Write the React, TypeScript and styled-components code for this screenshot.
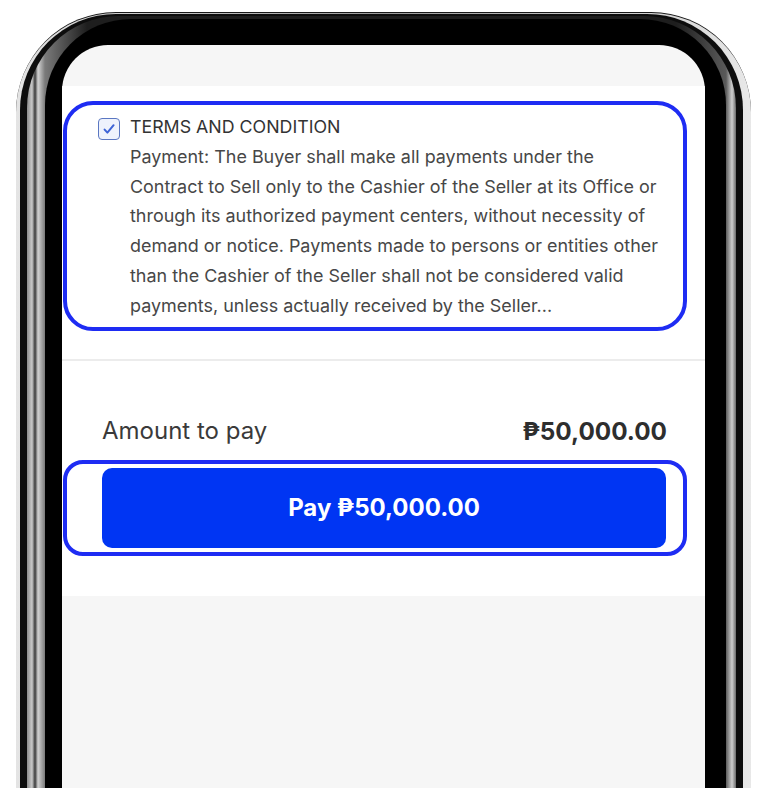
import React from "react";
import styled, { createGlobalStyle } from "styled-components";

const GlobalStyle = createGlobalStyle`
  html, body {
    margin: 0;
    padding: 0;
    background: #ffffff;
    overflow: hidden;
  }
  body {
    font-family: Inter, "Noto Sans", "Liberation Sans", sans-serif;
    width: 768px;
    height: 788px;
  }
`;

const termsLines = [
  "Payment: The Buyer shall make all payments under the",
  "Contract to Sell only to the Cashier of the Seller at its Office or",
  "through its authorized payment centers, without necessity of",
  "demand or notice. Payments made to persons or entities other",
  "than the Cashier of the Seller shall not be considered valid",
  "payments, unless actually received by the Seller...",
];

const amount = "₱50,000.00";

const App = () => {
  return (
    <>
      <GlobalStyle />
      <Stage>
        <PhoneShell>
          <EdgeDark>
            <MetalBand>
              <Bezel>
                <Screen>
                  <StatusArea />
                  <CheckoutCard>
                    <TermsBox>
                      <CheckBox>
                        <svg width="14" height="14" viewBox="0 0 14 14">
                          <path
                            d="M2.6 7.6 L5.4 10.6 L11.6 3.2"
                            fill="none"
                            stroke="#3d63d6"
                            strokeWidth="2"
                            strokeLinecap="round"
                            strokeLinejoin="round"
                          />
                        </svg>
                      </CheckBox>
                      <TermsText>
                        <TermsTitle>TERMS AND CONDITION</TermsTitle>
                        {termsLines.map((line, index) => (
                          <TermsLine key={index}>{line}</TermsLine>
                        ))}
                      </TermsText>
                    </TermsBox>
                    <Divider />
                    <AmountRow>
                      <AmountLabel>Amount to pay</AmountLabel>
                      <AmountValue>{amount}</AmountValue>
                    </AmountRow>
                    <PayOutline>
                      <PayButton>Pay {amount}</PayButton>
                    </PayOutline>
                  </CheckoutCard>
                </Screen>
              </Bezel>
            </MetalBand>
          </EdgeDark>
        </PhoneShell>
      </Stage>
    </>
  );
};

export default App;

const Stage = styled.div`
  width: 768px;
  height: 788px;
  overflow: hidden;
  padding: 12px 0 0 16px;
  box-sizing: border-box;
`;

/* phone body: light rim, dark line, metal band, black bezel */
const PhoneShell = styled.div`
  width: 735px;
  height: 820px;
  box-sizing: border-box;
  padding: 1px 8px 0 4px;
  border-radius: 100px 100px 0 0;
  background: linear-gradient(90deg, #e4e4e4 0%, #9a9a9a 50%, #e8e8e8 100%);
  border-top: 1px solid #1a1a1a;
`;

const EdgeDark = styled.div`
  height: 100%;
  box-sizing: border-box;
  padding: 2px 7px 0 7px;
  border-radius: 96px 96px 0 0;
  background: #0d0d0d;
`;

const MetalBand = styled.div`
  height: 100%;
  box-sizing: border-box;
  padding: 3px 10px 0 18px;
  border-radius: 92px 92px 0 0;
  background: linear-gradient(
    90deg,
    #8c8c8c 0px,
    #c9c9c9 5px,
    #3a3a3a 8px,
    #d2d2d2 11px,
    #7a7a7a 18px,
    #1e1e1e 60px,
    #1e1e1e calc(100% - 60px),
    #5a5a5a calc(100% - 10px),
    #cfcfcf calc(100% - 4px),
    #6a6a6a 100%
  );
`;

const Bezel = styled.div`
  height: 100%;
  box-sizing: border-box;
  padding: 26px 21px 0 17px;
  border-radius: 86px 86px 0 0;
  background: #000;
`;

const Screen = styled.div`
  height: 100%;
  border-radius: 46px 46px 0 0;
  background: #f6f6f6;
  overflow: hidden;
`;

const StatusArea = styled.div`
  height: 41px;
`;

const CheckoutCard = styled.div`
  background: #ffffff;
  padding: 15px 0 40px;
`;

const TermsBox = styled.div`
  display: flex;
  align-items: flex-start;
  gap: 10px;
  margin: 0 18px 0 1px;
  padding: 7px 10px 6px 31px;
  border: 4px solid #1e2cf3;
  border-radius: 30px;
`;

const CheckBox = styled.div`
  flex: none;
  width: 22px;
  height: 22px;
  margin-top: 6px;
  box-sizing: border-box;
  display: flex;
  align-items: center;
  justify-content: center;
  border: 1.5px solid #5b77c2;
  border-radius: 4px;
  background: #eef2fc;
`;

const TermsText = styled.div`
  line-height: 29.8px;
  color: #474747;
  white-space: nowrap;
`;

const TermsTitle = styled.div`
  font-size: 17.8px;
  color: #333;
  text-transform: uppercase;
`;

const TermsLine = styled.div`
  font-size: 17.95px;
`;

const Divider = styled.div`
  height: 2px;
  margin-top: 28px;
  background: #ececec;
`;

const AmountRow = styled.div`
  display: flex;
  justify-content: space-between;
  align-items: center;
  padding: 0 38px 0 40px;
  margin-top: 52px;
  height: 36px;
`;

const AmountLabel = styled.span`
  font-size: 24px;
  color: #3a3a3a;
`;

const AmountValue = styled.span`
  font-size: 24.3px;
  font-weight: 700;
  color: #2e2e2e;
`;

const PayOutline = styled.div`
  margin: 11px 18px 0 1px;
  padding: 4px 17px 4px 35px;
  border: 4px solid #1e2cf3;
  border-radius: 20px;
`;

const PayButton = styled.button`
  display: flex;
  width: 100%;
  height: 80px;
  align-items: center;
  justify-content: center;
  border: none;
  border-radius: 10px;
  background: #0035f3;
  color: #ffffff;
  font-family: Inter, "Noto Sans", "Liberation Sans", sans-serif;
  font-size: 24px;
  font-weight: 700;
  cursor: pointer;
`;
